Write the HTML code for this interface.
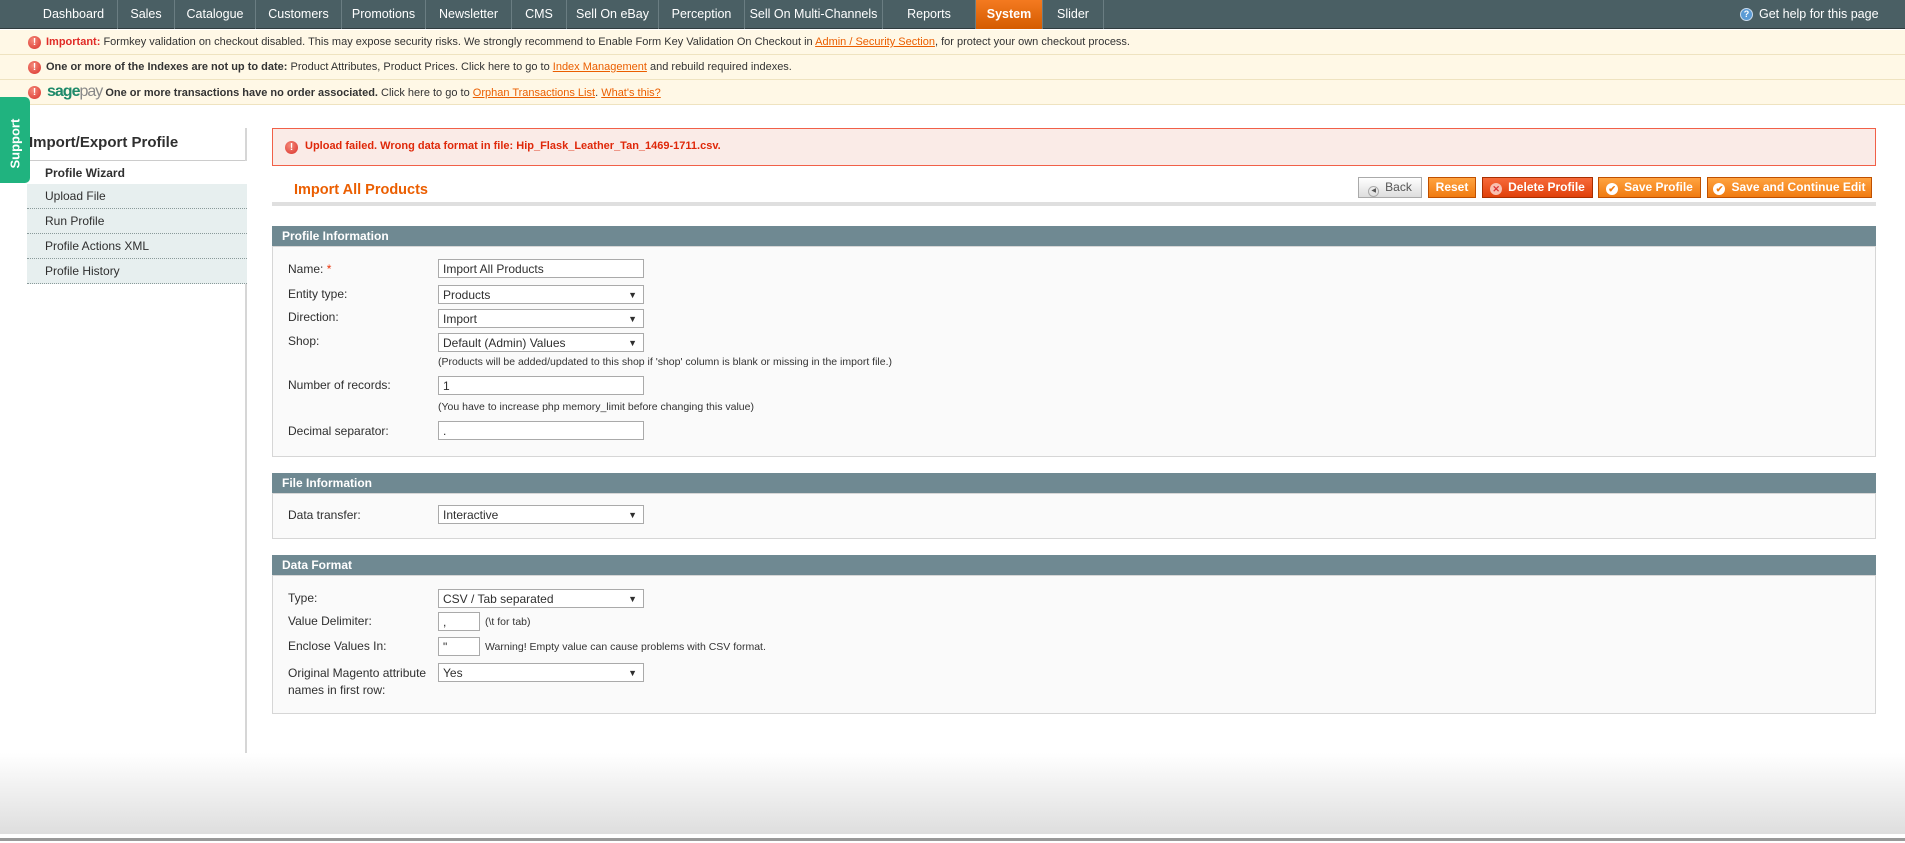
<!DOCTYPE html>
<html><head><meta charset="utf-8"><style>
*{box-sizing:border-box;margin:0;padding:0}
body{width:1905px;height:843px;position:relative;background:#fff;font-family:"Liberation Sans",Arial,sans-serif;font-size:12px;color:#2f2f2f;overflow:hidden}
.abs{position:absolute}
#nav{left:0;top:0;width:1905px;height:29px;background:#4a5f64;border-bottom:1px solid #2f3b3e}
#nav span{position:absolute;top:0;height:29px;line-height:29px;color:#fff;font-size:12.5px;text-align:center;border-right:1px solid #6a7d82}
#nav span.sys{background:linear-gradient(#f47a20,#d45b00);font-weight:bold}
.notice{left:0;width:1905px;height:25px;background:#fff8e6;border-bottom:1px solid #efe3c0;line-height:24px;font-size:11px;padding-left:46px;color:#333}
.ico{position:absolute;width:13px;height:13px;border-radius:50%;background:radial-gradient(circle at 40% 35%,#f58a7a,#d9302a);color:#fff;font-size:10px;font-weight:bold;text-align:center;line-height:13px}
.notice a{color:#eb5e00;text-decoration:underline}
#support{left:0;top:97px;width:30px;height:86px;background:#20b37f;border-radius:0 5px 5px 0}
#support span{position:absolute;left:-14px;top:35px;transform:rotate(-90deg);color:#fff;font-weight:bold;font-size:13px;width:58px}
#side{left:27px;top:128px;width:220px;height:625px;border-right:2px solid #d6d6d6}
.sitem{position:absolute;left:0;width:220px;height:25px;background:#e7efef;border-bottom:1px dotted #8a9a9a;padding-left:18px;line-height:25px;font-size:12px}
.fs{left:272px;width:1604px;border:1px solid #d6d6d6;background:#fafafa}
.fh{left:272px;width:1604px;height:20px;background:#6f8992;color:#fff;font-weight:bold;font-size:12px;line-height:20px;padding-left:10px}
.lbl{left:288px;font-size:12px;color:#2f2f2f}
.inp{left:438px;width:206px;height:19px;border:1px solid #aaa;background:#fff;padding:2px 4px;font-size:12px;line-height:14px}
.sel::after{content:"▼";position:absolute;right:6px;top:2px;font-size:9px;line-height:14px}
.note{left:438px;font-size:10.5px;color:#333}
.btn{position:absolute;top:177px;height:21px;border:1px solid #bf5000;background:linear-gradient(#ffa340,#f07a10);color:#fff;font-weight:bold;font-size:12px;line-height:19px;text-align:center}
.ck{display:inline-block;width:12px;height:12px;border-radius:50%;background:#fff;color:#f07a10;font-size:9px;line-height:12px;vertical-align:-1px;margin-right:6px}
</style></head><body>
<div id="nav" class="abs">
<span style="left:30px;width:88px">Dashboard</span>
<span style="left:118px;width:57px">Sales</span>
<span style="left:175px;width:81px">Catalogue</span>
<span style="left:256px;width:86px">Customers</span>
<span style="left:342px;width:84px">Promotions</span>
<span style="left:426px;width:86px">Newsletter</span>
<span style="left:512px;width:55px">CMS</span>
<span style="left:567px;width:92px">Sell On eBay</span>
<span style="left:659px;width:86px">Perception</span>
<span style="left:745px;width:138px">Sell On Multi-Channels</span>
<span style="left:883px;width:93px">Reports</span>
<span class="sys" style="left:976px;width:67px">System</span>
<span style="left:1043px;width:61px">Slider</span>
<div class="abs" style="left:1740px;top:8px;width:13px;height:13px;border-radius:50%;background:#5b9bd5;border:1px solid #cde;color:#fff;font-size:9px;line-height:11px;text-align:center;font-weight:bold">?</div>
<div class="abs" style="left:1759px;top:0;line-height:29px;color:#fff;font-size:12.5px">Get help for this page</div>
</div>
<div class="notice abs" style="top:30px"><div class="ico" style="left:28px;top:6px">!</div><b style="color:#e02b27">Important:</b> Formkey validation on checkout disabled. This may expose security risks. We strongly recommend to Enable Form Key Validation On Checkout in <a>Admin / Security Section</a>, for protect your own checkout process.</div>
<div class="notice abs" style="top:55px"><div class="ico" style="left:28px;top:6px">!</div><b>One or more of the Indexes are not up to date:</b> Product Attributes, Product Prices. Click here to go to <a>Index Management</a> and rebuild required indexes.</div>
<div class="notice abs" style="top:80px;padding-left:47px"><div class="ico" style="left:28px;top:6px">!</div><span style="font-size:16px;color:#1f8a6a;letter-spacing:-1px;font-weight:bold">sage</span><span style="font-size:16px;color:#888;letter-spacing:-1px">pay</span> <b>One or more transactions have no order associated.</b> Click here to go to <a>Orphan Transactions List</a>. <a>What's this?</a></div>
<div id="side" class="abs">
<div class="abs" style="left:0;top:0;width:218px;height:33px;border-bottom:1px solid #ccc;font-size:15px;font-weight:bold;line-height:30px;padding-left:2px">Import/Export Profile</div>
<div class="abs" style="left:0;top:33px;width:220px;height:25px;padding-left:18px;line-height:25px;font-weight:bold;background:#fff;border-bottom:1px solid #ccc">Profile Wizard</div>
<div class="sitem" style="top:56px">Upload File</div>
<div class="sitem" style="top:81px">Run Profile</div>
<div class="sitem" style="top:106px">Profile Actions XML</div>
<div class="sitem" style="top:131px">Profile History</div>
</div>
<div id="support" class="abs"><span>Support</span></div>
<div class="abs" style="left:272px;top:128px;width:1604px;height:38px;background:#faebe7;border:1px solid #f16048"><div class="ico" style="left:12px;top:12px">!</div><div class="abs" style="left:32px;top:11px;color:#df280a;font-weight:bold;font-size:11px">Upload failed. Wrong data format in file: Hip_Flask_Leather_Tan_1469-1711.csv.</div></div>
<div class="abs" style="left:294px;top:182px;color:#eb5e00;font-weight:bold;font-size:14.5px">Import All Products</div>
<div class="abs" style="left:272px;top:202px;width:1604px;height:4px;background:#dfdfdf"></div>
<div class="btn" style="left:1358px;width:64px;background:linear-gradient(#fff,#ddd);border-color:#aaa;color:#555;font-weight:normal"><span style="display:inline-block;width:11px;height:11px;border-radius:50%;border:1px solid #aaa;font-size:6px;line-height:9px;vertical-align:-1px;margin-right:6px">◀</span>Back</div>
<div class="btn" style="left:1428px;width:48px">Reset</div>
<div class="btn" style="left:1482px;width:111px;background:linear-gradient(#f76a3a,#e0400a);border-color:#a82e00"><span class="ck" style="color:#d33;background:#f8c0b0">✕</span>Delete Profile</div>
<div class="btn" style="left:1598px;width:103px"><span class="ck">✔</span>Save Profile</div>
<div class="btn" style="left:1707px;width:165px"><span class="ck">✔</span>Save and Continue Edit</div>

<div class="fh abs" style="top:226px">Profile Information</div>
<div class="fs abs" style="top:246px;height:211px"></div>
<div class="lbl abs" style="top:262px">Name: <span style="color:#eb340a">*</span></div><div class="inp abs" style="top:259px">Import All Products</div>
<div class="lbl abs" style="top:287px">Entity type:</div><div class="inp sel abs" style="top:285px">Products</div>
<div class="lbl abs" style="top:310px">Direction:</div><div class="inp sel abs" style="top:309px">Import</div>
<div class="lbl abs" style="top:334px">Shop:</div><div class="inp sel abs" style="top:333px">Default (Admin) Values</div>
<div class="note abs" style="top:356px">(Products will be added/updated to this shop if 'shop' column is blank or missing in the import file.)</div>
<div class="lbl abs" style="top:378px">Number of records:</div><div class="inp abs" style="top:376px">1</div>
<div class="note abs" style="top:401px">(You have to increase php memory_limit before changing this value)</div>
<div class="lbl abs" style="top:424px">Decimal separator:</div><div class="inp abs" style="top:421px">.</div>

<div class="fh abs" style="top:473px">File Information</div>
<div class="fs abs" style="top:493px;height:46px"></div>
<div class="lbl abs" style="top:508px">Data transfer:</div><div class="inp sel abs" style="top:505px">Interactive</div>

<div class="fh abs" style="top:555px">Data Format</div>
<div class="fs abs" style="top:575px;height:139px"></div>
<div class="lbl abs" style="top:591px">Type:</div><div class="inp sel abs" style="top:589px">CSV / Tab separated</div>
<div class="lbl abs" style="top:614px">Value Delimiter:</div><div class="inp abs" style="top:612px;width:42px">,</div><div class="note abs" style="left:485px;top:616px">(\t for tab)</div>
<div class="lbl abs" style="top:639px">Enclose Values In:</div><div class="inp abs" style="top:637px;width:42px">"</div><div class="note abs" style="left:485px;top:641px">Warning! Empty value can cause problems with CSV format.</div>
<div class="lbl abs" style="top:665px;line-height:17px">Original Magento attribute<br>names in first row:</div><div class="inp sel abs" style="top:663px">Yes</div>

<div class="abs" style="left:0;top:753px;width:1905px;height:81px;background:linear-gradient(#fff,#dedede)"></div>
<div class="abs" style="left:0;top:838px;width:1905px;height:3px;background:#999"></div>
</body></html>
